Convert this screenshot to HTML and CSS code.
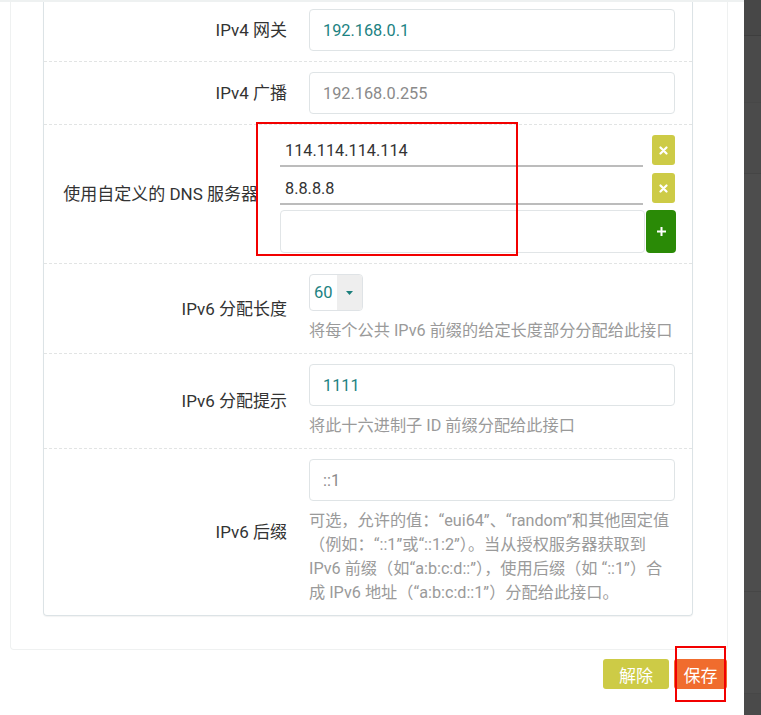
FILE: index.html
```html
<!DOCTYPE html>
<html lang="zh-CN">
<head>
<meta charset="utf-8">
<title>接口设置</title>
<link rel="stylesheet" href="styles.css">
</head>
<body>
<div class="app">
  <div class="main">
    <div class="topline"></div>
    <div class="outer">
      <div class="panel">
        <div class="row">
          <div class="label">IPv4 网关</div>
          <div class="field"><input class="input" type="text" value="192.168.0.1"></div>
        </div>
        <div class="row">
          <div class="label">IPv4 广播</div>
          <div class="field"><input class="input muted" type="text" placeholder="192.168.0.255"></div>
        </div>
        <div class="row row-dns">
          <div class="label">使用自定义的 DNS 服务器</div>
          <div class="dns-list">
            <div class="dns-item">
              <input class="dns-value" type="text" value="114.114.114.114">
              <button class="btn-remove" type="button"><svg width="9" height="9" viewBox="0 0 9 9"><path d="M1.5 1.5L7.5 7.5M7.5 1.5L1.5 7.5" stroke="#fff" stroke-width="2.2" stroke-linecap="round"/></svg></button>
            </div>
            <div class="dns-item">
              <input class="dns-value" type="text" value="8.8.8.8">
              <button class="btn-remove" type="button"><svg width="9" height="9" viewBox="0 0 9 9"><path d="M1.5 1.5L7.5 7.5M7.5 1.5L1.5 7.5" stroke="#fff" stroke-width="2.2" stroke-linecap="round"/></svg></button>
            </div>
            <div class="dns-add">
              <input class="dns-new" type="text">
              <button class="btn-add" type="button"><svg width="11" height="11" viewBox="0 0 11 11"><path d="M5.5 1V10M1 5.5H10" stroke="#fff" stroke-width="2"/></svg></button>
            </div>
          </div>
        </div>
        <div class="row">
          <div class="label">IPv6 分配长度</div>
          <div class="field">
            <div class="select">
              <span class="select-value">60</span>
              <span class="select-arrow"><svg width="7" height="4" viewBox="0 0 7 4"><path d="M0 0H7L3.5 4Z" fill="#1b7f7c"/></svg></span>
            </div>
            <div class="hint">将每个公共 IPv6 前缀的给定长度部分分配给此接口</div>
          </div>
        </div>
        <div class="row">
          <div class="label">IPv6 分配提示</div>
          <div class="field">
            <input class="input" type="text" value="1111">
            <div class="hint">将此十六进制子 ID 前缀分配给此接口</div>
          </div>
        </div>
        <div class="row">
          <div class="label">IPv6 后缀</div>
          <div class="field">
            <input class="input muted" type="text" placeholder="::1">
            <div class="hint">可选，允许的值：“eui64”、“random”和其他固定值<br>（例如：“::1”或“::1:2”）。当从授权服务器获取到<br>IPv6 前缀（如“a:b:c:d::”），使用后缀（如 “::1”）合<br>成 IPv6 地址（“a:b:c:d::1”）分配给此接口。</div>
          </div>
        </div>
      </div>
    </div>
    <div class="footer">
      <button class="btn btn-reset" type="button">解除</button>
      <button class="btn btn-save" type="button">保存</button>
    </div>
  </div>
  <div class="sidebar">
    <div class="sb sb-1"></div>
    <div class="sb sb-2"></div>
    <div class="sb sb-3"></div>
    <div class="sb sb-4"></div>
    <div class="sb sb-5"></div>
    <div class="sb sb-6"></div>
  </div>
  <div class="annot annot-dns"></div>
  <div class="annot annot-save"></div>
</div>
</body>
</html>
```

FILE: styles.css
```css
* { box-sizing: border-box; }

body {
  margin: 0;
  background: #fff;
  color: #333;
  font-family: Roboto, "Noto Sans CJK SC", sans-serif;
  font-size: 16px;
}

.app {
  position: relative;
  display: flex;
  height: 715px;
  overflow: hidden;
}

.main {
  width: 744px;
  flex: 0 0 744px;
}

.topline {
  height: 2px;
  background: #eef1f1;
}

.outer {
  margin-left: 10px;
  width: 718px;
  border: 1px solid #eff1f1;
  border-top: none;
  border-radius: 0 0 4px 4px;
  padding: 0 34px 33px 32px;
}

.panel {
  border: 1px solid #dce3e6;
  border-top: none;
  border-radius: 0 0 4px 4px;
  box-shadow: 0 1px 1px rgba(0, 0, 0, 0.05);
}

.row {
  display: grid;
  grid-template-columns: 243px 366px;
  column-gap: 22px;
  align-items: center;
  padding: 10px 0;
  border-bottom: 1px dashed #e2e4e4;
}

.row:first-child { padding-top: 7px; }
.row:last-child { border-bottom: none; }

.row-dns {
  grid-template-columns: 214px 396px;
}

.label {
  text-align: right;
  color: #333;
  font-size: 17px;
  line-height: 24px;
}

.field {
  display: flex;
  flex-direction: column;
  align-items: flex-start;
}

.input {
  display: block;
  width: 100%;
  height: 42px;
  margin: 0;
  border: 1px solid #dfe4e6;
  border-radius: 4px;
  padding: 0 13px;
  font: inherit;
  font-size: 16.3px;
  color: #1c8282;
  background: #fff;
  outline: none;
}

.input.muted::placeholder { color: #8a8a8a; opacity: 1; }

.hint {
  margin-top: 8px;
  line-height: 24px;
  color: #9a9a9a;
  font-size: 16.2px;
}

/* DNS dynamic list */
.dns-list {
  display: flex;
  flex-direction: column;
}

.dns-item {
  display: flex;
  align-items: flex-start;
  gap: 9px;
}

.dns-item + .dns-item { margin-top: 6px; }

.dns-value {
  width: 363px;
  height: 32px;
  margin: 0;
  border: none;
  border-bottom: 2px solid #bcbcbc;
  padding: 0 5px;
  font: inherit;
  font-size: 16.3px;
  color: #333;
  background: transparent;
  outline: none;
}

.btn-remove {
  width: 23px;
  height: 30px;
  padding: 0;
  border: none;
  border-radius: 3px;
  background: #cdcb46;
  display: flex;
  align-items: center;
  justify-content: center;
}

.dns-add {
  display: flex;
  gap: 1px;
  margin-top: 5px;
}

.dns-new {
  width: 365px;
  height: 43px;
  margin: 0;
  border: 1px solid #e1e5e7;
  border-radius: 4px;
  font: inherit;
  outline: none;
}

.btn-add {
  width: 30px;
  height: 43px;
  padding: 0;
  border: none;
  border-radius: 4px;
  background: #2a8a06;
  display: flex;
  align-items: center;
  justify-content: center;
}

/* select */
.select {
  display: flex;
  width: 54px;
  height: 37px;
  border: 1px solid #dfe3e6;
  border-radius: 4px;
  overflow: hidden;
}

.select-value {
  flex: 1;
  padding-left: 4px;
  line-height: 35px;
  font-size: 16.5px;
  color: #1c8282;
}

.select-arrow {
  width: 25px;
  background: #eeeeee;
  display: flex;
  align-items: center;
  justify-content: center;
}

/* footer */
.footer {
  display: flex;
  justify-content: flex-end;
  gap: 5px;
  padding: 9px 17px 0 0;
}

.btn {
  height: 30px;
  padding: 0;
  border: none;
  border-radius: 3px;
  color: #fff;
  font: inherit;
  font-size: 17px;
}

.btn-reset { width: 66px; background: #cdcb46; }
.btn-save { width: 53px; background: #f06c2e; }

/* right dark bar */
.sidebar {
  flex: 0 0 17px;
  display: flex;
  flex-direction: column;
  background: #4d4d4d;
}

.sb { border-bottom: 1px solid #444; }
.sb-1 { height: 36px; background: #474747; border-bottom-color: #3e3e3e; }
.sb-2 { height: 67px; background: #4a4a4a; border-bottom-color: #474747; }
.sb-3 { height: 71px; background: #4b4b4b; border-bottom-color: #454545; }
.sb-4 { height: 418px; background: #4d4d4d; border-bottom-color: #464646; }
.sb-5 { height: 102px; background: #4d4d4d; border-bottom-color: #474747; }
.sb-6 { flex: 1; background: #4a4a4a; border-bottom: none; }

/* annotation overlays */
.annot {
  position: absolute;
  border: 2px solid #f20000;
  pointer-events: none;
}

.annot-dns { left: 256px; top: 122px; width: 262px; height: 134px; }
.annot-save { left: 675px; top: 646px; width: 51px; height: 56px; }
```
